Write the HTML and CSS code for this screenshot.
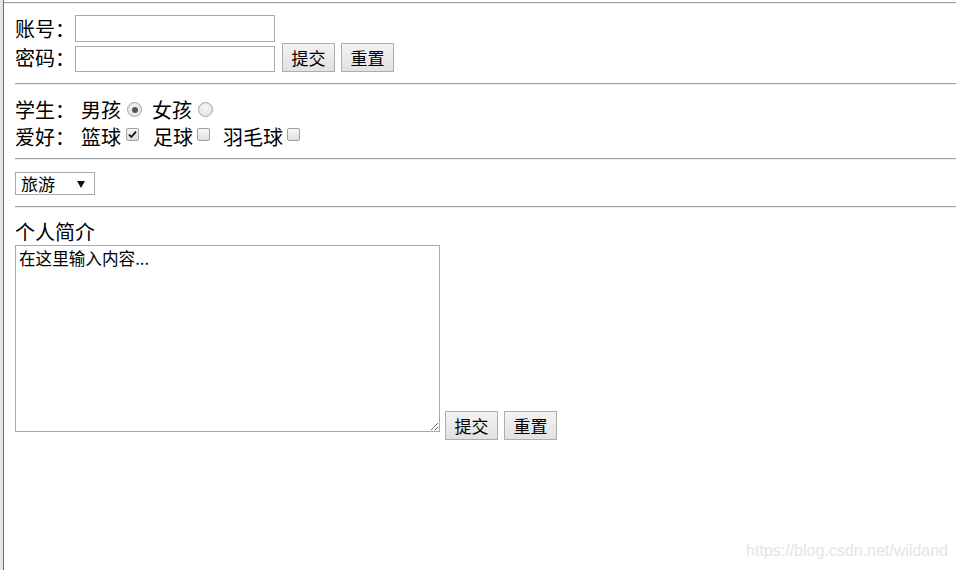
FILE: index.html
```html
<!DOCTYPE html>
<html lang="zh-CN">
<head>
<meta charset="utf-8">
<title>表单</title>
<link rel="stylesheet" href="styles.css">
</head>
<body>
<div class="frame">
<div class="edge"></div>
<div class="edge-line"></div>
<div class="page">
  <hr class="rule rule-top">
  <form class="form">
    <div class="row row-account">
      <span class="label">账号：</span><input class="field" type="text">
    </div>
    <div class="row row-password">
      <span class="label">密码：</span><input class="field" type="password"><button type="button" class="btn btn-first">提交</button><button type="button" class="btn btn-next">重置</button>
    </div>
    <hr class="rule rule-2">
    <div class="line line-sex">
      <span class="label">学生：</span>
      <span class="opt opt-first">男孩</span><span class="radio checked"></span>
      <span class="opt opt-r2">女孩</span><span class="radio"></span>
    </div>
    <div class="line line-hobby">
      <span class="label">爱好：</span>
      <span class="opt opt-first">篮球</span><span class="check check-1 checked"><svg viewBox="0 0 13 13" width="13" height="13"><path d="M3 6.6 L5.4 9 L10 3.6" fill="none" stroke="#111" stroke-width="1.8"/></svg></span>
      <span class="opt opt-c2">足球</span><span class="check check-2"></span>
      <span class="opt opt-c3">羽毛球</span><span class="check check-2"></span>
    </div>
    <hr class="rule rule-3">
    <div class="select-wrap">
      <select class="select"><option>旅游</option></select>
      <svg class="select-arrow" viewBox="0 0 8 7" width="8" height="7"><path d="M0 0 H8 L4 7 Z" fill="#111"/></svg>
    </div>
    <hr class="rule rule-4">
    <div class="intro-title">个人简介</div>
    <div class="intro-row">
      <textarea class="intro">在这里输入内容...</textarea><button type="button" class="btn btn-bottom">提交</button><button type="button" class="btn btn-next">重置</button>
    </div>
  </form>
</div>
</div>
<div class="watermark">https://blog.csdn.net/wildand</div>
</body>
</html>
```
FILE: styles.css
```css
html, body {
  margin: 0;
  padding: 0;
}
body {
  position: relative;
  background: #fff;
  color: #000;
  font-family: "Noto Sans CJK SC", sans-serif;
  font-size: 20px;
  height: 570px;
  overflow: hidden;
}
.frame {
  display: flex;
  height: 570px;
}
.edge {
  flex: none;
  width: 3px;
  background: #e4e4e4;
}
.edge-line {
  flex: none;
  width: 1px;
  background: #f0343c;
}
.page {
  flex: 1;
  min-width: 0;
}
.rule {
  border: 0;
  border-top: 1px solid #a0a0a0;
  border-bottom: 1px solid #eeeeee;
  height: 0;
  margin: 0;
}
.rule-top { margin-top: 2px; }
.form {
  padding-left: 11px;
  margin: 0;
}
.row {
  display: flex;
  align-items: center;
  line-height: 27px;
}
.row-account {
  margin-top: 11px;
  height: 27px;
}
.row-password {
  margin-top: 1px;
  height: 29px;
  align-items: flex-end;
}
.row-password .label {
  align-self: center;
}
.label {
  display: inline-block;
  width: 60px;
  white-space: nowrap;
}
.field {
  width: 200px;
  height: 27px;
  box-sizing: border-box;
  border: 1px solid #a9a9a9;
  margin: 0;
  padding: 1px 3px;
  font-size: 17px;
  background: #fff;
  outline: none;
}
.row-password .field { height: 26px; }
.btn {
  width: 53px;
  height: 29px;
  box-sizing: border-box;
  margin: 0;
  padding: 0;
  border: 1px solid #adadad;
  background: linear-gradient(#f3f3f3, #e1e1e1);
  font-family: "Noto Sans CJK SC", sans-serif;
  font-size: 17px;
  line-height: 27px;
  color: #000;
}
.btn-first { margin-left: 7px; }
.btn-next { margin-left: 6px; }
.btn-bottom { margin-left: 5px; }
.rule-2 { margin-top: 11px; }
.line {
  display: flex;
  align-items: center;
  height: 27px;
  line-height: 27px;
}
.line-sex { margin-top: 11px; }
.opt {
  white-space: nowrap;
}
.opt-first { margin-left: 6px; }
.opt-r2 { margin-left: 10px; }
.opt-c2 { margin-left: 14px; }
.opt-c3 { margin-left: 13px; }
.radio {
  display: inline-block;
  width: 15px;
  height: 15px;
  box-sizing: border-box;
  margin-left: 6px;
  border: 1px solid #a4a4a4;
  border-radius: 50%;
  background: radial-gradient(circle at 50% 40%, #f8f8f8, #dcdcdc);
  position: relative;
}
.radio.checked::after {
  content: "";
  position: absolute;
  left: 3.5px;
  top: 3.5px;
  width: 6px;
  height: 6px;
  border-radius: 50%;
  background: #555;
}
.check {
  display: inline-flex;
  width: 13px;
  height: 13px;
  box-sizing: border-box;
  border: 1px solid #a0a0a0;
  border-radius: 2px;
  background: linear-gradient(#f7f7f7, #dedede);
  margin-top: -4px;
  overflow: hidden;
}
.check svg {
  margin: -1px;
  flex: none;
}
.check-1 { margin-left: 5px; }
.check-2 { margin-left: 4px; }
.rule-3 { margin-top: 8px; }
.select-wrap {
  position: relative;
  width: 80px;
  height: 23px;
  margin-top: 12px;
}
.select {
  display: block;
  -webkit-appearance: none;
  appearance: none;
  width: 80px;
  height: 23px;
  box-sizing: border-box;
  margin: 0;
  border: 1px solid #a9a9a9;
  border-radius: 0;
  background: #fff;
  padding: 0 0 0 5px;
  font-family: "Noto Sans CJK SC", sans-serif;
  font-size: 17px;
  line-height: 21px;
  color: #000;
  outline: none;
}
.select-arrow {
  position: absolute;
  right: 10px;
  top: 9px;
  pointer-events: none;
}
.rule-4 { margin-top: 11px; }
.intro-title {
  margin-top: 10px;
  height: 27px;
  line-height: 27px;
}
.intro-row {
  display: flex;
  align-items: flex-end;
  padding-bottom: 8px;
}
.intro {
  display: block;
  width: 425px;
  height: 187px;
  box-sizing: border-box;
  margin: 0;
  align-self: flex-start;
  border: 1px solid #a9a9a9;
  padding: 2px 3px;
  font-family: "Noto Sans CJK SC", sans-serif;
  font-size: 16.6px;
  line-height: 20px;
  color: #000;
  resize: both;
  outline: none;
}
.intro-row .btn {
  margin-bottom: -8px;
}
.watermark {
  position: absolute;
  right: 8px;
  top: 541px;
  font-family: "Liberation Sans", Arial, sans-serif;
  font-size: 16px;
  line-height: 19px;
  color: #e4e4e4;
  white-space: nowrap;
}
```
